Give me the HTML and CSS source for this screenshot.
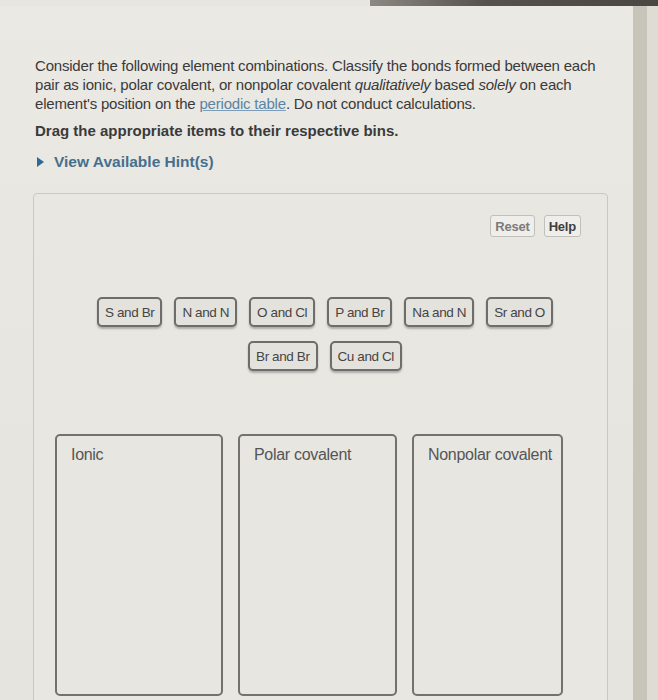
FILE: index.html
```html
<!DOCTYPE html>
<html lang="en">
<head>
<meta charset="utf-8">
<title>Classify bonds</title>
<link rel="stylesheet" href="styles.css">
</head>
<body>
<div class="topbar"><div class="topbar-dark"></div></div>
<div class="page">
  <main class="content">
    <p class="prompt"><span class="line">Consider the following element combinations. Classify the bonds formed between each</span><span class="line">pair as ionic, polar covalent, or nonpolar covalent <em>qualitatively</em> based <em>solely</em> on each</span><span class="line">element's position on the <a class="link" href="#">periodic table</a>. Do not conduct calculations.</span></p>
    <p class="instr">Drag the appropriate items to their respective bins.</p>
    <div class="hint"><span class="tri"></span><span>View Available Hint(s)</span></div>
    <section class="panel">
      <div class="tools">
        <button class="btn btn-reset">Reset</button>
        <button class="btn btn-help">Help</button>
      </div>
      <div class="chips">
        <div class="chip-row">
          <div class="chip">S and Br</div>
          <div class="chip">N and N</div>
          <div class="chip">O and Cl</div>
          <div class="chip">P and Br</div>
          <div class="chip">Na and N</div>
          <div class="chip">Sr and O</div>
        </div>
        <div class="chip-row">
          <div class="chip">Br and Br</div>
          <div class="chip">Cu and Cl</div>
        </div>
      </div>
      <div class="bins">
        <div class="bin bin-ionic"><div class="bin-label">Ionic</div></div>
        <div class="bin bin-polar"><div class="bin-label">Polar covalent</div></div>
        <div class="bin bin-nonpolar"><div class="bin-label">Nonpolar covalent</div></div>
      </div>
    </section>
  </main>
  <div class="edge-dark"></div>
  <div class="edge-light"></div>
</div>
</body>
</html>
```
FILE: styles.css
```css
* { box-sizing: border-box; }
html, body {
  margin: 0;
  padding: 0;
  height: 700px;
  overflow: hidden;
}
body {
  background: #e8e6e1;
  font-family: "Liberation Sans", Arial, sans-serif;
  color: #3b3b3b;
  display: flex;
  flex-direction: column;
}
.topbar {
  height: 6px;
  display: flex;
  justify-content: flex-end;
  background: #e8e6e1;
}
.topbar-dark {
  width: 288px;
  height: 6px;
  background: linear-gradient(90deg, #8c8983 0%, #55524d 40%, #4a4743 100%);
}
.page {
  flex: 1;
  display: flex;
  min-height: 0;
}
.content {
  width: 633px;
  padding: 50px 0 0 33px;
  background: linear-gradient(180deg, #ebe9e4 0%, #e8e6e1 50%, #e6e4df 100%);
}
.edge-dark {
  width: 14px;
  background: #c7c4b9;
}
.edge-light {
  flex: 1;
  background: #dfdcd4;
}
.prompt {
  margin: 0;
  padding-left: 2px;
  display: flex;
  flex-direction: column;
  font-size: 15px;
  line-height: 19px;
  letter-spacing: -0.2px;
  color: #3a3a3a;
}
.line {
  display: block;
  white-space: nowrap;
}
.prompt em { font-style: italic; }
.link {
  color: #5a84a3;
  text-decoration: underline;
  text-decoration-color: #7d9cb5;
}
.instr {
  margin: 9px 0 0;
  padding-left: 2px;
  font-size: 15px;
  line-height: 18px;
  font-weight: bold;
  letter-spacing: 0;
  color: #3a3a3a;
}
.hint {
  margin-top: 13px;
  display: flex;
  align-items: center;
  gap: 10px;
  padding-left: 4px;
  font-size: 15.5px;
  line-height: 18px;
  font-weight: bold;
  letter-spacing: 0;
  color: #466f8d;
}
.tri {
  width: 0;
  height: 0;
  border-top: 5px solid transparent;
  border-bottom: 5px solid transparent;
  border-left: 7px solid #2c6a98;
}
.panel {
  margin-top: 22px;
  width: 575px;
  height: 560px;
  border: 1px solid #cac8c3;
  border-radius: 4px;
  padding: 21px 26px 0 21px;
  background: #e9e7e2;
}
.tools {
  display: flex;
  justify-content: flex-end;
  gap: 9px;
}
.btn {
  height: 22px;
  padding: 0 4px;
  font-family: "Liberation Sans", Arial, sans-serif;
  font-size: 13px;
  font-weight: bold;
  letter-spacing: -0.2px;
  background: #efeeea;
  border: 1px solid #c1bfba;
  border-radius: 3px;
}
.btn-reset { color: #7b7b7b; }
.btn-help { color: #3e3e3e; }
.chips {
  margin-top: 60px;
  display: flex;
  flex-direction: column;
  align-items: center;
  gap: 14px;
  padding-left: 14px;
}
.chip-row {
  display: flex;
  gap: 12px;
}
.chip {
  height: 30px;
  padding: 0 6px;
  display: flex;
  align-items: center;
  font-size: 13.5px;
  letter-spacing: -0.4px;
  color: #454545;
  background: #e4e2dc;
  border: 2px solid #6d6d6b;
  border-radius: 5px;
  box-shadow: 0 2px 2px rgba(0, 0, 0, 0.25);
}
.bins {
  margin-top: 63px;
  display: flex;
  gap: 15px;
}
.bin {
  height: 262px;
  border: 2px solid #727270;
  border-radius: 5px;
  background: #e8e6e1;
  padding: 10px 0 0 14px;
}
.bin-ionic { width: 168px; }
.bin-polar { width: 159px; }
.bin-nonpolar { width: 151px; }
.bin-label {
  font-size: 16px;
  letter-spacing: -0.3px;
  color: #555555;
}
```
